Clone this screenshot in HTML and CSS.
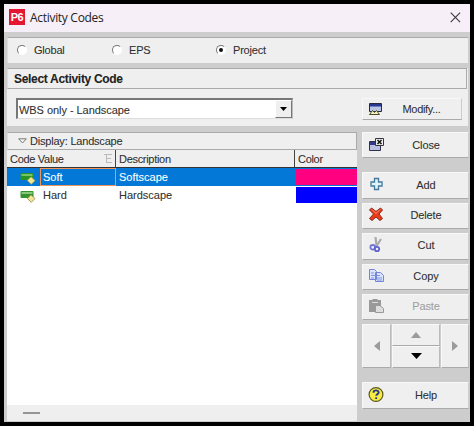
FILE: index.html
```
<!DOCTYPE html>
<html lang="en">
<head>
<meta charset="utf-8">
<title>Activity Codes</title>
<link rel="stylesheet" href="styles.css">
</head>
<body>
<main class="window">
  <header class="titlebar">
    <span class="logo">P6</span><h1>Activity Codes</h1>
    <svg class="x" width="11" height="11" viewBox="0 0 11 11"><path d="M.7.7l9.4 9.4M10.1.7L.7 10.1" fill="none" stroke="#3d3540" stroke-width="1.1"/></svg>
  </header>
  <section class="scope">
    <label class="radio"><i class="dot"></i><span>Global</span></label>
    <label class="radio"><i class="dot"></i><span>EPS</span></label>
    <label class="radio"><i class="dot on"></i><span>Project</span></label>
  </section>
  <section class="select">
    <h2><span>Select Activity Code</span></h2>
    <div class="pick">
      <div class="combo"><span>WBS only - Landscape</span><b class="drop"><svg width="7" height="4"><path d="M0 0h7L3.5 4z"/></svg></b></div>
      <button class="btn modify"><svg width="15" height="15" viewBox="0 0 15 15"><path d="M1.5 1.5h12v8h-12z" fill="#b9c3e6" stroke="#28283c"/><path d="M2 2h11v2.5H2z" fill="#28368f"/><path d="M1.5 12.5l3-4 2 2 2-2 3 4z" fill="#efefc0" stroke="#4b4b22"/></svg><span>Modify...</span></button>
    </div>
  </section>
  <div class="content">
    <section class="table">
      <div class="display"><svg width="9" height="6" viewBox="0 0 9 6"><path d="M.7.8h7.6L4.5 5z" fill="#f5f5f5" stroke="#777"/></svg><span>Display: Landscape</span></div>
      <div class="cols"><div class="c1"><span>Code Value</span><svg width="8" height="9" viewBox="0 0 8 9"><path d="M0 .5h8M3 4.5h4M3 8.5h5M2.5 1v8" fill="none" stroke="#bbb"/></svg></div><div class="c2"><span>Description</span></div><div class="c3"><span>Color</span></div></div>
      <div class="row selected"><div class="icon"><svg width="16" height="13" viewBox="0 0 16 13"><rect x=".5" y="1" width="13" height="7" rx="1" fill="#279524"/><path d="M1.5 3h11" stroke="#8bd078" stroke-width="1.6"/><path d="M11 4.8l4 3.8-3.7 3.7-4-3.8z" fill="#f0e899" stroke="#b2a550" stroke-width=".8"/></svg></div><div class="val"><span>Soft</span></div><div class="desc"><span>Softscape</span></div><div class="swatch pink"></div></div>
      <div class="row"><div class="icon"><svg width="16" height="13" viewBox="0 0 16 13"><rect x=".5" y="1" width="13" height="7" rx="1" fill="#35922e"/><path d="M1.5 3h11" stroke="#9bd78c" stroke-width="1.6"/><path d="M11 4.8l4 3.8-3.7 3.7-4-3.8z" fill="#f0e899" stroke="#92853b" stroke-width=".8"/></svg></div><div class="val"><span>Hard</span></div><div class="desc"><span>Hardscape</span></div><div class="swatch blue"></div></div>
      <div class="blank"></div>
      <div class="scroll"><i></i></div>
    </section>
    <aside class="actions">
      <button class="btn close"><svg width="17" height="16" viewBox="0 0 17 16"><path d="M1.5 4.5h11v9h-11z" fill="#b9c0e2" stroke="#30304c"/><path d="M2 5h10v3H2z" fill="#303c8b"/><path d="M7.5 1.5h8v7h-8z" fill="#eee" stroke="#34343c"/><path d="M9.5 3l4 4m0-4l-4 4" stroke="#111" stroke-width="1.5"/></svg><span>Close</span></button>
      <button class="btn add"><svg width="16" height="16" viewBox="0 0 16 16"><path d="M6.5 1.5h4V5H14v4h-3.500v3.500h-4V9H3V5h3.500z" fill="#dcf4fa" stroke="#44799c" stroke-width="1.3"/></svg><span>Add</span></button>
      <button class="btn"><svg width="16" height="16" viewBox="0 0 16 16"><path d="M3.500 1L8 4.500 12.500 1 14.500 3 11 7l3.500 4.500-2.500 2L8 10l-4 3.500-2.500-2L5.500 7l-4-4z" fill="#e93a1a" stroke="#8c2818"/><path d="M4 2.500l4 4 4-4" fill="none" stroke="#ff8d67"/></svg><span>Delete</span></button>
      <button class="btn"><svg width="16" height="16" viewBox="0 0 16 16"><path d="M7.500 0l1 9M13 2L8 10" stroke="#aaa" stroke-width="2.200"/><circle cx="4.700" cy="10.300" r="2.300" fill="none" stroke="#7275d2" stroke-width="1.800"/><circle cx="9" cy="12" r="2.200" fill="none" stroke="#5e62ce" stroke-width="1.800"/></svg><span>Cut</span></button>
      <button class="btn"><svg width="17" height="16" viewBox="0 0 17 16"><path d="M1.500 1.500h5l2 2v8h-7zM7.500 4.500h5l3 3v6h-8z" fill="#dae3ff" stroke="#7584d8"/><path d="M3 5h3M3 7.500h4M3 10h3M9 7.500h3M9 10h5M9 12h5" stroke="#7997e2"/></svg><span>Copy</span></button>
      <button class="btn off"><svg width="17" height="16" viewBox="0 0 17 16"><path d="M1 2h3l1-1h4l1 1h3v12H1z" fill="#999"/><path d="M4 4.500h6" stroke="#ddd"/><path d="M7.500 7.500H12l3.500 3v4h-8z" fill="#ddd" stroke="#999"/></svg><span>Paste</span></button>
      <div class="arrows">
        <button class="key"><svg width="6" height="10"><path d="M6 0v10L0 5z" fill="#9b9b9b"/></svg></button>
        <div class="mid"><button class="key"><svg width="10" height="6"><path d="M0 6h10L5 0z" fill="#9b9b9b"/></svg></button><button class="key"><svg class="down" width="11" height="6"><path d="M0 0h11L5.500 6z"/></svg></button></div>
        <button class="key"><svg width="6" height="10"><path d="M0 0v10l6-5z" fill="#9b9b9b"/></svg></button>
      </div>
      <button class="btn help"><svg width="16" height="16" viewBox="0 0 16 16"><circle cx="8" cy="7.500" r="6.900" fill="#f7ed40" stroke="#5a581f" stroke-width="1.200"/><path d="M5.500 5.700C5.500 2.700 10.700 2.700 10.700 5.500c0 1.600-2.500 1.600-2.500 3.300M8.200 10.300v1.800" fill="none" stroke="#27388c" stroke-width="1.900"/></svg><span>Help</span></button>
    </aside>
  </div>
</main>
</body>
</html>
```
FILE: styles.css
```
* { box-sizing: border-box; }
body { margin: 0; background: #000; font: 11px "Liberation Sans", sans-serif; color: #303030; letter-spacing: -.2px; -webkit-text-stroke: .08px; }
h1, h2 { margin: 0; }
span { white-space: nowrap; }
svg { display: block; flex: none; }
.window { width: 474px; height: 426px; border: 4px solid #000; background: #cdcdcd; }
.titlebar { height: 28px; display: flex; align-items: center; background: #f6eff7; padding: 0 9px 2px 5px; -webkit-text-stroke: 0; }
.logo { width: 16px; height: 16px; background: #e51632; color: #fff; font: bold 11px/16px "Liberation Sans", sans-serif; text-align: center; letter-spacing: -.5px; }
h1 { margin-left: 5px; color: #222; font: 12px "Open Sans", sans-serif; letter-spacing: -.3px; }
.x { margin-left: auto; }
.scope { height: 26px; margin: 5px 2px 0 3px; border-top: 1px solid #aaa; border-left: 1px solid #ddd; background: #efefef; display: grid; grid-template-columns: 95px 104px 1fr; padding: 0 0 1px 9px; align-items: center; }
.radio { display: flex; align-items: center; gap: 7px; }
.dot { width: 10px; height: 10px; border: 1px solid #fff; border-top-color: #777; border-left-color: #777; border-radius: 50%; background: #fff; display: grid; place-items: center; }
.on::after { content: ""; width: 4px; height: 4px; border-radius: 50%; background: #111; }
.select { height: 58px; margin: 5px 2px 0 3px; background: #efefef; }
h2 { height: 21px; margin-right: 1px; padding-left: 6px; border: 1px solid #aaa; border-left-color: #ddd; color: #222; font: bold 12px/20px "Liberation Sans", sans-serif; letter-spacing: -.31px; }
.pick { height: 37px; display: flex; justify-content: space-between; padding: 9px 6px 0 9px; }
.combo { width: 277px; height: 21px; border: 2px solid #777; border-right: 1px solid #bbb; border-bottom: 1px solid #ddd; background: #fff; display: flex; align-items: center; justify-content: space-between; padding-left: 1px; letter-spacing: -.05px; }
.combo > span { padding-top: 2px; }
.drop { width: 17px; height: 18px; background: #efefef; border: 1px solid #fff; border-right-color: #777; border-bottom-color: #777; display: grid; place-items: center; }
.btn { width: 107px; height: 26px; flex: none; border: 1px solid #f8f8f8; border-right-color: #ccc; border-bottom: 1px solid #aaa; border-radius: 0; background: #efefef; color: #303030; font: 11px "Liberation Sans", sans-serif; letter-spacing: -.1px; display: grid; grid-template-columns: 18px 1fr; align-items: center; padding: 0 2px 0 5px; }
.btn span { justify-self: center; }
.btn.off { color: #a0a0a0; }
.modify { width: 100px; height: 22px; letter-spacing: -.3px; padding-right: 4px; }
.content { height: 290px; display: flex; justify-content: space-between; padding: 6px 1px 0 3px; }
.table { width: 350px; height: 289px; display: flex; flex-direction: column; background: #fff; }
.display { height: 18px; border: 1px solid #aaa; border-left-color: #ddd; background: #efefef; display: flex; align-items: center; gap: 3px; padding-left: 10px; flex: none; }
.cols { height: 18px; flex: none; display: flex; background: #efefef; border-bottom: 1px solid #333; }
.cols > div { display: flex; align-items: center; letter-spacing: -.3px; }
.cols .c1 { width: 108px; padding: 0 3px; justify-content: space-between; }
.cols .c2 { width: 179px; border-left: 1px solid #444; padding-left: 3px; }
.c3 { flex: 1; border-left: 1px solid #444; padding-left: 3px; }
.row { height: 18px; flex: none; display: flex; align-items: center; letter-spacing: 0; }
.selected { background: #0478d7; color: #fff; }
.icon { width: 33px; padding: 2px 0 0 13px; }
.val { width: 76px; height: 18px; display: flex; align-items: center; border: 1px solid transparent; padding-left: 2px; }
.selected .val { border-color: #f0955a; }
.desc { width: 180px; padding-left: 3px; }
.val span, .desc span { position: relative; top: -.5px; }
.swatch { flex: 1; height: 16px; }
.pink { background: #ff0080; }
.blue { background: #0000ff; }
.blank { flex: 1; }
.scroll { height: 16px; background: #efefef; padding: 7px 0 0 16px; }
.scroll i { display: block; width: 17px; height: 2px; background: #969696; }
.actions { width: 107px; display: flex; flex-direction: column; gap: 4px; }
.actions .btn { height: 26.4px; padding-bottom: 2px; }
.actions .close { margin-bottom: 10px; padding-bottom: 1px; }
.arrows { height: 44px; display: grid; grid-template-columns: 29px 48px 28px; gap: 1px; margin-bottom: 10px; }
.mid { display: grid; grid-template-rows: 22px 22px; }
.key { padding: 0; border: 1px solid #f8f8f8; border-right-color: #bbb; border-bottom-color: #aaa; background: #efefef; display: grid; place-items: center; }
.down { margin-top: -2px; }
```
